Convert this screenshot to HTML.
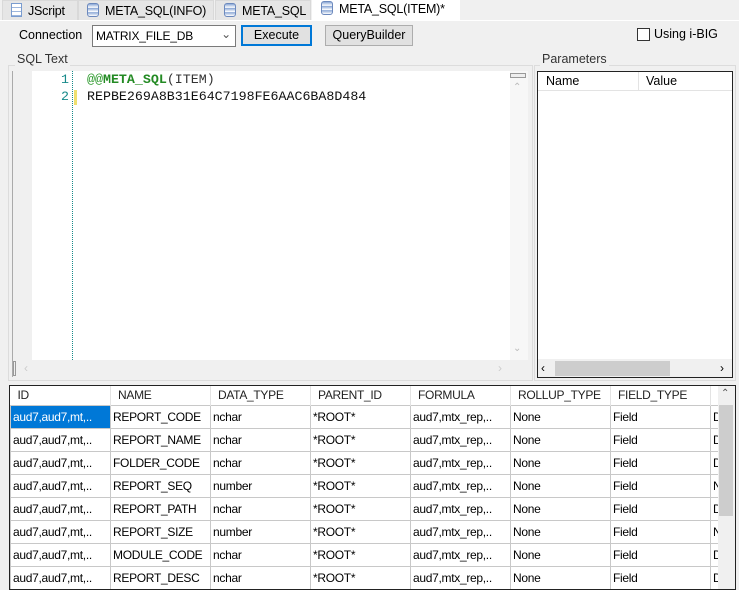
<!DOCTYPE html>
<html><head><style>
*{margin:0;padding:0;box-sizing:border-box}
body{width:739px;height:590px;background:#f0f0f0;font-family:"Liberation Sans",sans-serif;font-size:12px;color:#000;position:relative;overflow:hidden}
.a{position:absolute;white-space:nowrap}
.tab{position:absolute;top:0;height:20px;background:#e6e6e6;border:1px solid #d9d9d9;border-bottom:none;padding:2px 0 0 8px;font-size:12.5px;white-space:nowrap;letter-spacing:-0.2px}
.db{display:inline-block;width:12px;height:14px;vertical-align:-2px;margin-right:6px;border-radius:3px;background:linear-gradient(#8aa7d6,#fff 30%,#8aa7d6 35%,#fff 65%,#8aa7d6 70%,#fff);border:1px solid #6c89bd}
.doc{display:inline-block;width:11px;height:14px;vertical-align:-2px;margin-right:6px;border:1px solid #7a9ccf;background:repeating-linear-gradient(#fff 0 3px,#9db6dd 3px 4px)}
.grp{position:absolute;border:1px solid #dcdcdc}
.lbl{position:absolute;background:#f0f0f0;padding:0 2px;font-size:12px;color:#333}
.mono{font-family:"Liberation Mono",monospace;font-size:13.3px}
table{border-collapse:collapse;table-layout:fixed}
td{border:1px solid #c8c8c8;height:23px;padding:0 2px;font-size:12px;letter-spacing:-0.3px;overflow:hidden;white-space:nowrap}
th{border-right:1px solid #e3e3e3;height:19px;font-weight:normal;text-align:left;padding:0 7px;font-size:12px;letter-spacing:-0.3px;color:#222;background:#fff;overflow:hidden;white-space:nowrap}
</style></head><body>
<div class="tab" style="left:2px;width:76px"><span class="doc"></span>JScript</div>
<div class="tab" style="left:78px;width:136px"><span class="db"></span>META_SQL(INFO)</div>
<div class="tab" style="left:215px;width:96px"><span class="db"></span>META_SQL</div>
<div class="tab" style="left:312px;width:148px;background:#fff;border-color:#fff;padding-top:0"><span class="db"></span>META_SQL(ITEM)*</div>
<div class="a" style="left:0;top:20px;width:739px;height:1px;background:#fff"></div>

<div class="a" style="left:19px;top:28px;font-size:12.5px">Connection</div>
<div class="a" style="left:92px;top:25px;width:144px;height:22px;background:#fff;border:1px solid #7a7a7a;padding:3px 3px;font-size:12px;letter-spacing:-0.2px">MATRIX_FILE_DB<span style="position:absolute;right:4px;top:1px;color:#555">&#8964;</span></div>
<div class="a" style="left:241px;top:25px;width:71px;height:21px;background:#e1e1e1;border:2px solid #0078d7;text-align:center;line-height:16px;font-size:12.5px">Execute</div>
<div class="a" style="left:325px;top:25px;width:88px;height:21px;background:#e1e1e1;border:1px solid #adadad;text-align:center;line-height:18px;font-size:12.5px">QueryBuilder</div>
<div class="a" style="left:637px;top:28px;width:13px;height:13px;border:1px solid #333;background:#fff"></div>
<div class="a" style="left:654px;top:27px;font-size:12.5px">Using i-BIG</div>

<div class="grp" style="left:8px;top:65px;width:525px;height:316px"></div>
<div class="lbl" style="left:15px;top:52px;font-size:12.5px">SQL Text</div>
<div class="a" style="left:12px;top:71px;width:516px;height:306px;background:#fff;border-left:1px solid #aaa"></div>
<div class="a" style="left:13px;top:71px;width:19px;height:289px;background:#f0f0f0"></div>
<div class="a" style="left:72px;top:71px;height:289px;border-left:1px dotted #178a8a"></div>
<div class="a mono" style="left:61px;top:72px;color:#178a8a">1</div>
<div class="a mono" style="left:61px;top:89px;color:#178a8a">2</div>
<div class="a" style="left:74px;top:90px;width:3px;height:15px;background:#f0e070"></div>
<div class="a mono" style="left:87px;top:72px;color:#333"><span style="color:#2e9a2e">@@<b style="color:#238a23">META_SQL</b></span>(ITEM)</div>
<div class="a mono" style="left:87px;top:89px;color:#111">REPBE269A8B31E64C7198FE6AAC6BA8D484</div>
<div class="a" style="left:510px;top:71px;width:18px;height:289px;background:#f7f7f7"></div>
<div class="a" style="left:510px;top:73px;width:16px;height:5px;border:1px solid #999;background:#eee"></div>
<div class="a" style="left:513px;top:82px;color:#bbb;font-size:10px">&#8963;</div>
<div class="a" style="left:513px;top:343px;color:#bbb;font-size:10px">&#8964;</div>
<div class="a" style="left:13px;top:360px;width:515px;height:17px;background:#f0f0f0"></div>
<div class="a" style="left:13px;top:361px;width:3px;height:15px;border:1px solid #999"></div>
<div class="a" style="left:24px;top:361px;color:#ccc">&lsaquo;</div>
<div class="a" style="left:498px;top:361px;color:#ccc">&rsaquo;</div>

<div class="grp" style="left:534px;top:65px;width:202px;height:316px"></div>
<div class="lbl" style="left:540px;top:52px;font-size:12.5px">Parameters</div>
<div class="a" style="left:537px;top:71px;width:196px;height:307px;background:#fff;border:1px solid #222"></div>
<div class="a" style="left:538px;top:72px;width:194px;height:19px;border-bottom:1px solid #e3e3e3"></div>
<div class="a" style="left:638px;top:72px;width:1px;height:19px;background:#e3e3e3"></div>
<div class="a" style="left:546px;top:74px;font-size:12.5px">Name</div>
<div class="a" style="left:646px;top:74px;font-size:12.5px">Value</div>
<div class="a" style="left:538px;top:359px;width:194px;height:18px;background:#f0f0f0"></div>
<div class="a" style="left:555px;top:361px;width:115px;height:15px;background:#cdcdcd"></div>
<div class="a" style="left:541px;top:361px;font-size:12px">&lsaquo;</div>
<div class="a" style="left:720px;top:361px;font-size:12px">&rsaquo;</div>

<div class="a" style="left:9px;top:385px;width:727px;height:205px;background:#fff;border:1px solid #222;overflow:hidden">
<table style="width:800px">
<colgroup><col style="width:100px"><col style="width:100px"><col style="width:100px"><col style="width:100px"><col style="width:100px"><col style="width:100px"><col style="width:100px"><col style="width:100px"></colgroup>
<tr><th>ID</th><th>NAME</th><th>DATA_TYPE</th><th>PARENT_ID</th><th>FORMULA</th><th>ROLLUP_TYPE</th><th>FIELD_TYPE</th><th></th></tr>
<tr><td style="background:#0078d7;color:#fff">aud7,aud7,mt,..</td><td>REPORT_CODE</td><td>nchar</td><td>*ROOT*</td><td>aud7,mtx_rep,..</td><td>None</td><td>Field</td><td>D</td></tr>
<tr><td>aud7,aud7,mt,..</td><td>REPORT_NAME</td><td>nchar</td><td>*ROOT*</td><td>aud7,mtx_rep,..</td><td>None</td><td>Field</td><td>D</td></tr>
<tr><td>aud7,aud7,mt,..</td><td>FOLDER_CODE</td><td>nchar</td><td>*ROOT*</td><td>aud7,mtx_rep,..</td><td>None</td><td>Field</td><td>D</td></tr>
<tr><td>aud7,aud7,mt,..</td><td>REPORT_SEQ</td><td>number</td><td>*ROOT*</td><td>aud7,mtx_rep,..</td><td>None</td><td>Field</td><td>N</td></tr>
<tr><td>aud7,aud7,mt,..</td><td>REPORT_PATH</td><td>nchar</td><td>*ROOT*</td><td>aud7,mtx_rep,..</td><td>None</td><td>Field</td><td>D</td></tr>
<tr><td>aud7,aud7,mt,..</td><td>REPORT_SIZE</td><td>number</td><td>*ROOT*</td><td>aud7,mtx_rep,..</td><td>None</td><td>Field</td><td>N</td></tr>
<tr><td>aud7,aud7,mt,..</td><td>MODULE_CODE</td><td>nchar</td><td>*ROOT*</td><td>aud7,mtx_rep,..</td><td>None</td><td>Field</td><td>D</td></tr>
<tr><td>aud7,aud7,mt,..</td><td>REPORT_DESC</td><td>nchar</td><td>*ROOT*</td><td>aud7,mtx_rep,..</td><td>None</td><td>Field</td><td>D</td></tr>
</table>
<div class="a" style="left:708px;top:0;width:17px;height:205px;background:#f0f0f0"></div>
<div class="a" style="left:709px;top:19px;width:14px;height:111px;background:#cdcdcd"></div>
<div class="a" style="left:711px;top:2px;font-size:10px;color:#555">&#8963;</div>
</div>
</body></html>
